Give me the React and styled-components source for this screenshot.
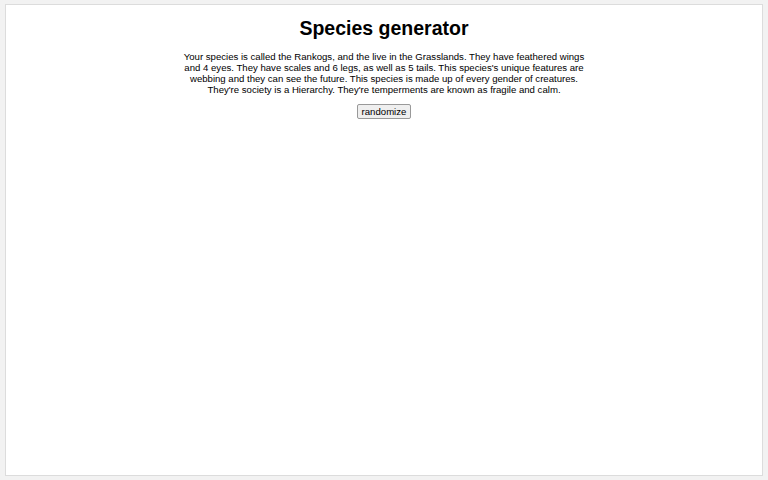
import React from 'react';
import styled, { createGlobalStyle } from 'styled-components';

const GlobalStyle = createGlobalStyle`
  html, body {
    margin: 0;
    background: #f2f2f2;
  }
`;

const Card = styled.div`
  margin: 4px 5px 0 5px;
  height: 472px;
  box-sizing: border-box;
  background: #fff;
  border: 1px solid #dcdcdc;
  font-family: "Liberation Sans", Arial, sans-serif;
  color: #000;
  text-align: center;
  padding-top: 11px;
`;

const Title = styled.h1`
  margin: 0;
  font-size: 19.5px;
  font-weight: bold;
  line-height: 24px;
`;

const Description = styled.p`
  width: 404px;
  margin: 11px auto 0;
  font-size: 9.6px;
  line-height: 11px;
`;

const Button = styled.button`
  margin-top: 9px;
  font-family: "Liberation Sans", Arial, sans-serif;
  font-size: 9.6px;
  padding: 1px 4px;
  background: #efefef;
  border: 1px solid #999;
  border-radius: 2px;
  color: #000;
`;

const description =
  "Your species is called the Rankogs, and the live in the Grasslands. They have feathered wings and 4 eyes. They have scales and 6 legs, as well as 5 tails. This species's unique features are webbing and they can see the future. This species is made up of every gender of creatures. They're society is a Hierarchy. They're temperments are known as fragile and calm.";

const App = () => {
  return (
    <>
      <GlobalStyle />
      <Card>
        <Title>Species generator</Title>
        <Description>{description}</Description>
        <Button>randomize</Button>
      </Card>
    </>
  );
};

export default App;
